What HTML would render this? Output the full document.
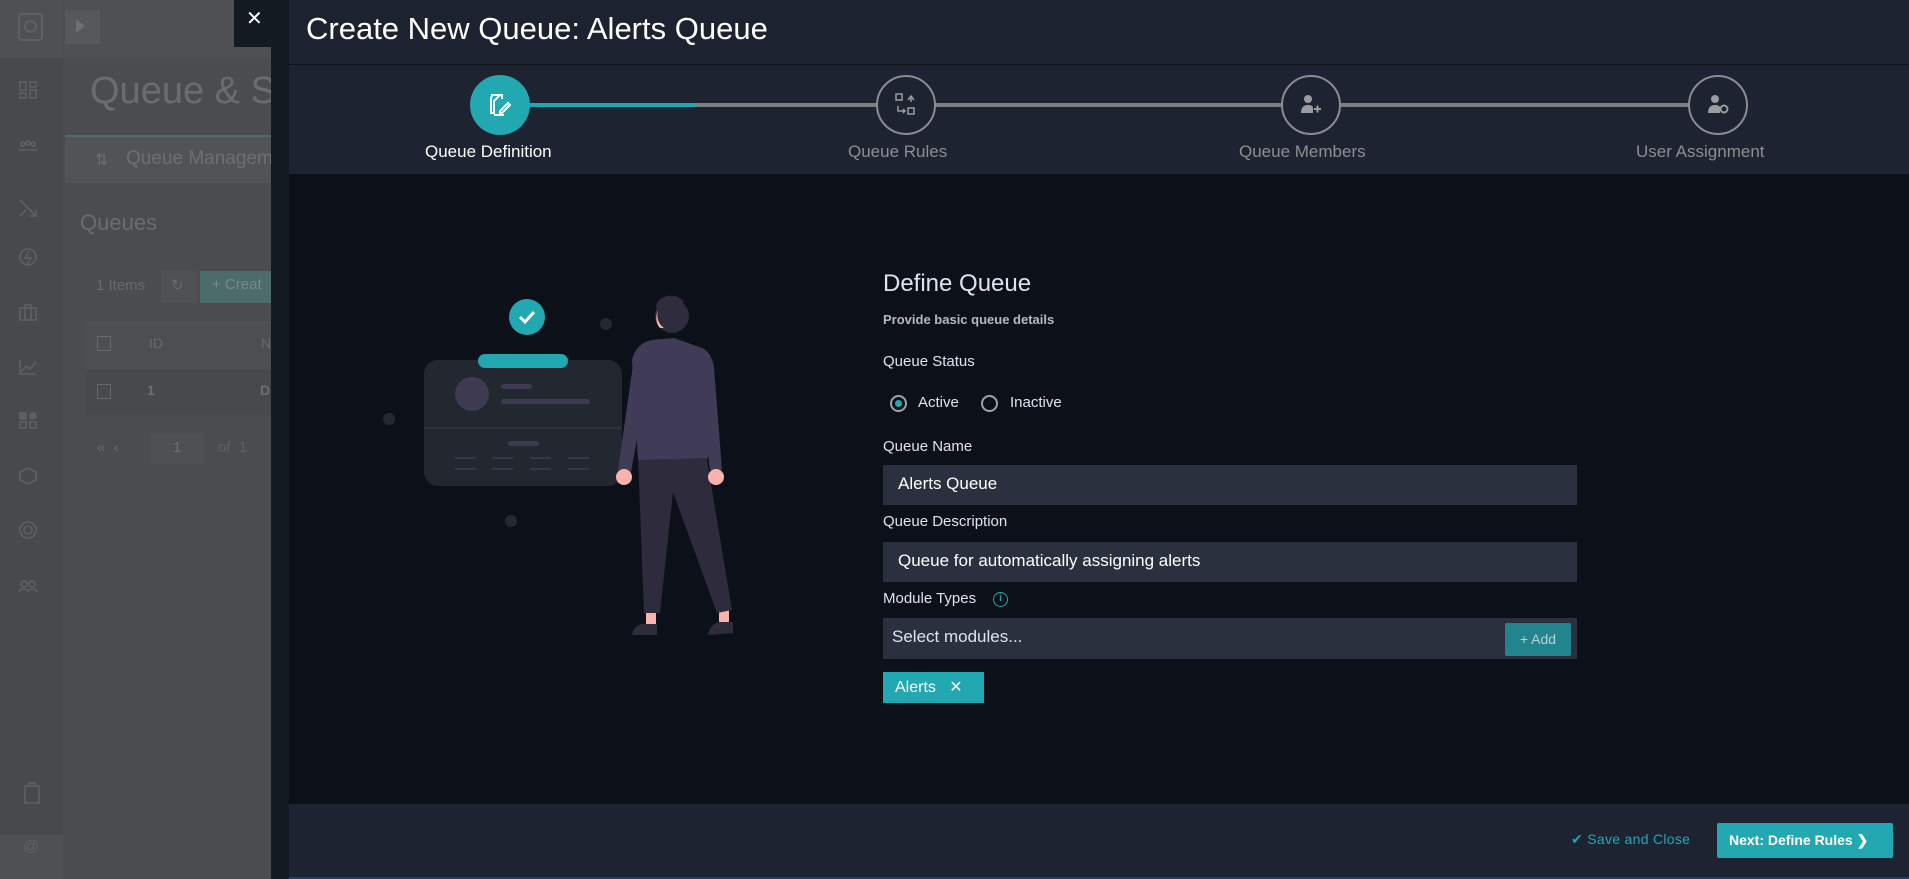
<!DOCTYPE html>
<html><head><meta charset="utf-8"><style>
*{box-sizing:border-box;margin:0;padding:0}
body{width:1909px;height:879px;overflow:hidden;background:#4b4c50;font-family:"Liberation Sans",sans-serif;position:relative}
.abs{position:absolute}
.t{position:absolute;white-space:nowrap}
</style></head><body>
<!-- background page (dimmed) -->
<div class="abs" style="left:0;top:0;width:63px;height:879px;background:#48494d"></div>
<div class="abs" style="left:0;top:0;width:63px;height:58px;background:#4f5054"></div>
<div class="abs" style="left:18px;top:13px;width:25px;height:28px;border:2px solid #5f6064;border-radius:4px"></div>
<div class="abs" style="left:24px;top:20px;width:13px;height:13px;border:2px solid #5f6064;border-radius:50%"></div>
<div class="abs" style="left:64px;top:0;width:207px;height:58px;background:#4f5054"></div>
<div class="abs" style="left:65px;top:10px;width:35px;height:34px;background:#57585c"></div>
<div class="abs" style="left:76px;top:19px;width:0;height:0;border-left:9px solid #6e6f73;border-top:7px solid transparent;border-bottom:7px solid transparent"></div>
<div class="abs" style="left:0;top:835px;width:63px;height:44px;background:#4f5054"></div>
<div class="t" style="left:23px;top:838px;color:#606165;font-size:16px">@</div>
<svg class="abs" style="left:18px;top:80px" width="28" height="560" fill="none" stroke="#5f6064" stroke-width="1.6">
<rect x="2" y="2" width="6" height="8"/><rect x="12" y="2" width="6" height="5"/><rect x="2" y="13" width="6" height="5"/><rect x="12" y="10" width="6" height="8"/>
<circle cx="5" cy="64" r="2"/><circle cx="10" cy="63" r="2"/><circle cx="15" cy="64" r="2"/><path d="M1 70h18"/>
<path d="M2 120l16 16M12 136h6v-6M2 136l6-6"/>
<circle cx="10" cy="177" r="8"/><path d="M11 171l-4 7h6l-4 7"/>
<rect x="2" y="228" width="16" height="12"/><path d="M7 228v12M13 228v12M7 228v-3h6v3"/>
<path d="M2 280v14h16M3 292l5-6 4 3 6-7"/>
<rect x="2" y="333" width="6" height="6" fill="#5f6064"/><circle cx="15" cy="336" r="3" fill="#5f6064"/><rect x="2" y="342" width="6" height="6"/><rect x="12" y="342" width="6" height="6"/>
<path d="M10 388l8 4v8l-8 4-8-4v-8z"/>
<circle cx="10" cy="450" r="8"/><circle cx="10" cy="450" r="4"/>
<circle cx="6" cy="504" r="3"/><circle cx="14" cy="504" r="3"/><path d="M1 512c1-4 9-4 10 0M10 512c1-4 8-4 9 0"/>
</svg>
<svg class="abs" style="left:22px;top:780px" width="20" height="26" fill="none" stroke="#5f6064" stroke-width="1.6"><rect x="3" y="6" width="14" height="17"/><path d="M7 6V3h6v3"/></svg>
<div class="t" style="left:90px;top:70px;color:#6b6c70;font-size:38px">Queue &amp; Sl</div>
<div class="abs" style="left:65px;top:135px;width:206px;height:48px;background:#525357;border-top:2px solid #4f6b6b"></div>
<div class="t" style="left:126px;top:148px;color:#6e6f73;font-size:19px">Queue Managem</div>
<div class="t" style="left:95px;top:150px;color:#6e6f73;font-size:16px">⇅</div>
<div class="t" style="left:80px;top:210px;color:#6b6c70;font-size:22px">Queues</div>
<div class="t" style="left:96px;top:277px;color:#68696d;font-size:15px">1 Items</div>
<div class="abs" style="left:161px;top:271px;width:36px;height:32px;background:#505155"></div>
<div class="t" style="left:171px;top:276px;color:#68696d;font-size:15px">↻</div>
<div class="abs" style="left:200px;top:271px;width:71px;height:32px;background:#4c6b6b"></div>
<div class="t" style="left:212px;top:276px;color:#79898a;font-size:15px">+ Creat</div>
<div class="abs" style="left:85px;top:322px;width:186px;height:47px;background:#4d4e52;border-top:1px solid #555"></div>
<div class="abs" style="left:85px;top:370px;width:186px;height:45px;background:#48494d"></div>
<div class="abs" style="left:97px;top:336px;width:14px;height:15px;border:1px solid #68696d"></div>
<div class="abs" style="left:97px;top:384px;width:14px;height:15px;border:1px solid #68696d"></div>
<div class="t" style="left:149px;top:335px;color:#68696d;font-size:14px">ID</div>
<div class="t" style="left:261px;top:335px;color:#68696d;font-size:14px">N</div>
<div class="t" style="left:147px;top:382px;color:#6e6f73;font-size:14px;font-weight:bold">1</div>
<div class="t" style="left:260px;top:382px;color:#6e6f73;font-size:14px;font-weight:bold">D</div>
<div class="abs" style="left:150px;top:433px;width:54px;height:31px;background:#4f5054"></div>
<div class="t" style="left:97px;top:439px;color:#68696d;font-size:15px">«&nbsp;&nbsp;‹</div>
<div class="t" style="left:173px;top:439px;color:#6e6f73;font-size:15px">1</div>
<div class="t" style="left:218px;top:439px;color:#5e5f63;font-size:15px">of&nbsp;&nbsp;1</div>
<!-- dark strip & close -->
<div class="abs" style="left:271px;top:0;width:18px;height:879px;background:#141a22"></div>
<div class="abs" style="left:234px;top:0;width:37px;height:47px;background:#141a22"></div>
<div class="t" style="left:246px;top:6px;color:#fff;font-size:20px">✕</div>
<!-- modal -->
<div class="abs" style="left:289px;top:0;width:1620px;height:65px;background:#1c2230;border-bottom:1px solid #10151c"></div>
<div class="t" style="left:306px;top:11px;color:#fff;font-size:31px">Create New Queue: Alerts Queue</div>
<div class="abs" style="left:289px;top:65px;width:1620px;height:109px;background:#1d2331"></div>
<div class="abs" style="left:530px;top:103px;width:165px;height:4px;background:#22a8b1"></div>
<div class="abs" style="left:695px;top:103px;width:1000px;height:4px;background:#7b7d80"></div>
<div class="abs" style="left:470px;top:75px;width:60px;height:60px;border-radius:50%;background:#22a8b1"></div>
<svg class="abs" style="left:486px;top:91px" width="28" height="28" fill="none" stroke="#fff" stroke-width="2"><path d="M6 4h8l-6 6v12h-3V8zM10 4h6v4M8 24h10"/><path d="M14 20l8-8 2 2-8 8h-2z"/></svg>
<div class="abs" style="left:876px;top:75px;width:60px;height:60px;border-radius:50%;background:#1d2331;border:2px solid #8a8c8f"></div>
<svg class="abs" style="left:894px;top:92px" width="24" height="26" fill="none" stroke="#9a9c9f" stroke-width="1.5"><rect x="2" y="2" width="6" height="6"/><rect x="14" y="16" width="6" height="6"/><path d="M14 8l3-4 3 4M17 4v6M4 14v5h7M9 17l2 2-2 2"/></svg>
<div class="abs" style="left:1281px;top:75px;width:60px;height:60px;border-radius:50%;background:#1d2331;border:2px solid #8a8c8f"></div>
<svg class="abs" style="left:1299px;top:93px" width="24" height="24" fill="#9a9c9f"><circle cx="9" cy="6" r="4"/><path d="M2 20c0-6 3-8 7-8 3 0 4 1 5 2v6z"/><path d="M15 16h7M18.5 12.5v7" stroke="#9a9c9f" stroke-width="2"/></svg>
<div class="abs" style="left:1688px;top:75px;width:60px;height:60px;border-radius:50%;background:#1d2331;border:2px solid #8a8c8f"></div>
<svg class="abs" style="left:1706px;top:93px" width="24" height="24" fill="#9a9c9f"><circle cx="9" cy="6" r="4"/><path d="M2 20c0-6 3-8 7-8 3 0 4 1 5 2v6z"/><circle cx="18" cy="16" r="3.5" fill="none" stroke="#9a9c9f" stroke-width="2"/></svg>
<div class="t" style="left:425px;top:142px;color:#fff;font-size:17px">Queue Definition</div>
<div class="t" style="left:848px;top:142px;color:#8c8e92;font-size:17px">Queue Rules</div>
<div class="t" style="left:1239px;top:142px;color:#8c8e92;font-size:17px">Queue Members</div>
<div class="t" style="left:1636px;top:142px;color:#8c8e92;font-size:17px">User Assignment</div>
<!-- body -->
<div class="abs" style="left:289px;top:174px;width:1620px;height:630px;background:#0c1119"></div>
<!-- illustration -->
<svg class="abs" style="left:370px;top:280px" width="420" height="370">
<circle cx="19" cy="139" r="6" fill="#24282f"/><circle cx="236" cy="44" r="6" fill="#24282f"/><circle cx="141" cy="241" r="6" fill="#24282f"/>
<rect x="54" y="80" width="198" height="126" rx="14" fill="#23272f"/>
<path d="M54 148h198" stroke="#34343f" stroke-width="1.5"/>
<rect x="108" y="74" width="90" height="14" rx="7" fill="#22a8b1"/>
<circle cx="157" cy="37" r="18" fill="#22a8b1"/><path d="M150 37l5 5 9-10" stroke="#fff" stroke-width="3" fill="none"/>
<circle cx="102" cy="114" r="17" fill="#3e3a52"/>
<rect x="131" y="104" width="31" height="5" rx="2.5" fill="#3e3a52"/><rect x="131" y="119" width="89" height="5" rx="2.5" fill="#3e3a52"/>
<rect x="138" y="161" width="31" height="5" rx="2.5" fill="#3e3a52"/>
<path d="M85 178h21M122 178h21M160 178h21M198 178h21M85 189h21M122 189h21M160 189h21M198 189h21" stroke="#3e3a52" stroke-width="1.5"/>
<!-- person -->
<rect x="276" y="331" width="10" height="14" fill="#fbb1ad"/><rect x="349" y="328" width="10" height="14" fill="#fbb1ad"/>
<path d="M262 355h25v-11h-14c-6 0-10 5-11 11zM338 355l25-2v-11h-12c-7 0-12 6-13 13z" fill="#2e2b3a"/>
<path d="M268 176L336 174L362 330L347 333L303 212L290 333L274 333Z" fill="#2e2b3c"/>
<path d="M262 80c3-12 10-18 20-20l22-2l28 10c6 3 10 8 10 16L338 178L268 180Z" fill="#403b56"/>
<path d="M264 78L248 190L261 192L278 100Z" fill="#403b56"/>
<path d="M332 70c8 3 11 10 12 18L352 190L340 190L330 110Z" fill="#403b56"/>
<circle cx="254" cy="197" r="8" fill="#fbb1ad"/><circle cx="346" cy="197" r="8" fill="#fbb1ad"/>
<circle cx="302" cy="36" r="17" fill="#2f2c3d"/><path d="M286 28c0-14 22-16 28-6l-12 4z" fill="#2f2c3d"/><path d="M288 30c-2 6 0 14 6 18l-4 0c-4-4-5-12-2-18z" fill="#fbb1ad"/>
</svg>
<!-- form -->
<div class="t" style="left:883px;top:270px;color:#dfe3ee;font-size:24px">Define Queue</div>
<div class="t" style="left:883px;top:312px;color:#b5b9c0;font-size:13px;font-weight:bold">Provide basic queue details</div>
<div class="t" style="left:883px;top:353px;color:#dfe3ee;font-size:15px">Queue Status</div>
<div class="abs" style="left:890px;top:395px;width:17px;height:17px;border-radius:50%;border:2px solid #9ea2a8"></div>
<div class="abs" style="left:895px;top:400px;width:7px;height:7px;border-radius:50%;background:#22a8b1"></div>
<div class="t" style="left:918px;top:394px;color:#dfe3ee;font-size:15px">Active</div>
<div class="abs" style="left:981px;top:395px;width:17px;height:17px;border-radius:50%;border:2px solid #9ea2a8"></div>
<div class="t" style="left:1010px;top:394px;color:#dfe3ee;font-size:15px">Inactive</div>
<div class="t" style="left:883px;top:438px;color:#dfe3ee;font-size:15px">Queue Name</div>
<div class="abs" style="left:883px;top:465px;width:694px;height:40px;background:#2a303e"></div>
<div class="t" style="left:898px;top:474px;color:#fff;font-size:17px">Alerts Queue</div>
<div class="t" style="left:883px;top:513px;color:#dfe3ee;font-size:15px">Queue Description</div>
<div class="abs" style="left:883px;top:542px;width:694px;height:40px;background:#2a303e"></div>
<div class="t" style="left:898px;top:551px;color:#fff;font-size:17px">Queue for automatically assigning alerts</div>
<div class="t" style="left:883px;top:590px;color:#dfe3ee;font-size:15px">Module Types</div>
<div class="abs" style="left:993px;top:592px;width:15px;height:15px;border-radius:50%;border:1.5px solid #22a8b1;color:#22a8b1;font-size:10px;text-align:center;line-height:12px;font-weight:bold">i</div>
<div class="abs" style="left:883px;top:618px;width:694px;height:41px;background:#2a303e"></div>
<div class="t" style="left:892px;top:627px;color:#dfe3ee;font-size:17px">Select modules...</div>
<div class="abs" style="left:1505px;top:623px;width:66px;height:33px;background:#22848c;border-radius:2px;color:#b8d3d6;font-size:14px;text-align:center;line-height:33px">+ Add</div>
<div class="abs" style="left:883px;top:672px;width:101px;height:31px;background:#22a8b1;color:#fff;font-size:16px;line-height:31px;padding-left:12px">Alerts&nbsp;&nbsp;&nbsp;✕</div>
<!-- footer -->
<div class="abs" style="left:289px;top:804px;width:1620px;height:73px;background:#1d2331"></div>
<div class="abs" style="left:289px;top:877px;width:1620px;height:2px;background:#2c3a55"></div>
<div class="t" style="left:1571px;top:831px;color:#22a8b1;font-size:14px;letter-spacing:.3px">✔ Save and Close</div>
<div class="abs" style="left:1717px;top:823px;width:176px;height:35px;background:#22a8b1;border-radius:2px;color:#fff;font-size:14px;font-weight:bold;line-height:35px;padding-left:12px">Next: Define Rules&nbsp;❯</div>
</body></html>
